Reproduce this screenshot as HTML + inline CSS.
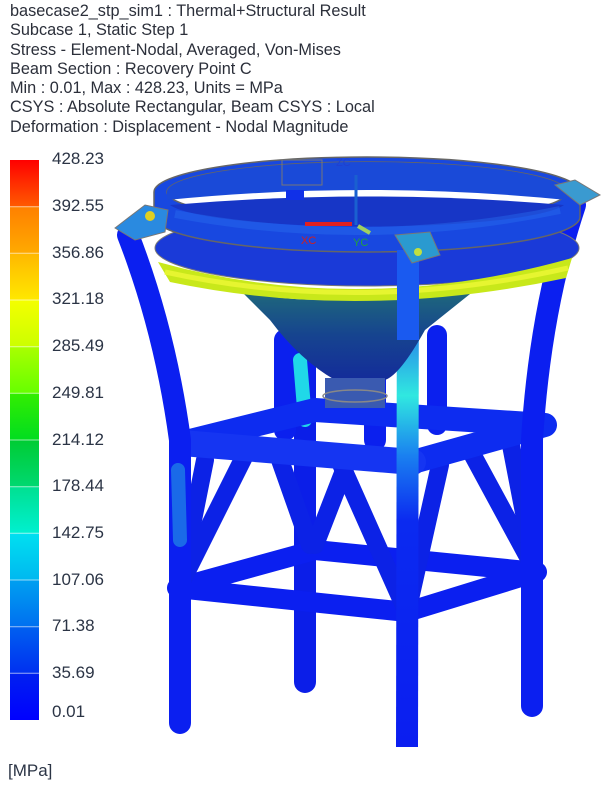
<!DOCTYPE html>
<html><head><meta charset="utf-8"><style>
html,body{margin:0;padding:0;background:#fff;width:607px;height:793px;overflow:hidden;position:relative}
.hd{position:absolute;left:10px;top:2px;font:16.3px/19.3px "Liberation Sans",sans-serif;color:#2b2f3a;white-space:nowrap}
.lb{position:absolute;left:52px;font:17px "Liberation Sans",sans-serif;color:#2b3445}
svg{position:absolute;left:0;top:0}
</style></head><body>
<div class="hd">basecase2_stp_sim1 : Thermal+Structural Result<br>Subcase 1, Static Step 1<br>Stress - Element-Nodal, Averaged, Von-Mises<br>Beam Section : Recovery Point C<br>Min : 0.01, Max : 428.23, Units = MPa<br>CSYS : Absolute Rectangular, Beam CSYS : Local<br>Deformation : Displacement - Nodal Magnitude</div>
<svg width="607" height="793" viewBox="0 0 607 793">
<defs>
<linearGradient id="leg" x1="0" y1="0" x2="0" y2="1">
<stop offset="0" stop-color="#ff0000"/><stop offset="0.083" stop-color="#ff5a00"/>
<stop offset="0.083" stop-color="#ff8000"/><stop offset="0.167" stop-color="#ffaa00"/>
<stop offset="0.167" stop-color="#ffb800"/><stop offset="0.25" stop-color="#ffe800"/>
<stop offset="0.25" stop-color="#f4ff00"/><stop offset="0.333" stop-color="#ccff00"/>
<stop offset="0.333" stop-color="#aaff00"/><stop offset="0.417" stop-color="#66ff00"/>
<stop offset="0.417" stop-color="#33ee00"/><stop offset="0.5" stop-color="#00dd20"/>
<stop offset="0.5" stop-color="#00cc33"/><stop offset="0.583" stop-color="#00d870"/>
<stop offset="0.583" stop-color="#00e090"/><stop offset="0.667" stop-color="#00f0d0"/>
<stop offset="0.667" stop-color="#00e0f0"/><stop offset="0.75" stop-color="#00b8f0"/>
<stop offset="0.75" stop-color="#00a0f0"/><stop offset="0.833" stop-color="#0070f0"/>
<stop offset="0.833" stop-color="#0060f0"/><stop offset="0.917" stop-color="#0030f0"/>
<stop offset="0.917" stop-color="#0020f0"/><stop offset="1" stop-color="#0000ff"/>
</linearGradient>
<linearGradient id="frontleg" x1="0" y1="0" x2="0" y2="1">
<stop offset="0" stop-color="#1a5af0"/><stop offset="0.2" stop-color="#2a9ae8"/><stop offset="0.3" stop-color="#30e8e0"/><stop offset="0.42" stop-color="#1a80f0"/><stop offset="0.55" stop-color="#0b2af0"/><stop offset="1" stop-color="#0b1ef0"/>
</linearGradient>
<linearGradient id="cone" x1="0" y1="0" x2="0" y2="1">
<stop offset="0" stop-color="#1f6a7a"/><stop offset="0.5" stop-color="#16448f"/><stop offset="1" stop-color="#142c9a"/>
</linearGradient>
</defs>
<rect x="10" y="160" width="29" height="560" fill="url(#leg)"/>
<g stroke="#fff" stroke-width="1" opacity="0.6">
<line x1="10" y1="206.7" x2="39" y2="206.7"/><line x1="10" y1="253.3" x2="39" y2="253.3"/><line x1="10" y1="300" x2="39" y2="300"/><line x1="10" y1="346.7" x2="39" y2="346.7"/><line x1="10" y1="393.3" x2="39" y2="393.3"/><line x1="10" y1="440" x2="39" y2="440"/><line x1="10" y1="486.7" x2="39" y2="486.7"/><line x1="10" y1="533.3" x2="39" y2="533.3"/><line x1="10" y1="580" x2="39" y2="580"/><line x1="10" y1="626.7" x2="39" y2="626.7"/><line x1="10" y1="673.3" x2="39" y2="673.3"/>
</g>
<g stroke-linecap="round" fill="none">
<line x1="305" y1="340" x2="305" y2="682" stroke="#0b1ee8" stroke-width="22"/>
<line x1="285" y1="340" x2="285" y2="430" stroke="#0b20ee" stroke-width="22"/>
<line x1="300" y1="360" x2="305" y2="420" stroke="#20d8e8" stroke-width="14"/>
<line x1="375" y1="345" x2="375" y2="440" stroke="#0b20ee" stroke-width="22"/>
<line x1="437" y1="335" x2="437" y2="425" stroke="#0b20ee" stroke-width="20"/>
<polyline points="177,588 407,612 537,572 315,550 177,588" stroke="#0b1ff0" stroke-width="20" stroke-linejoin="round"/>
<g stroke="#0c22e6" stroke-width="18">
<line x1="180" y1="585" x2="245" y2="455"/><line x1="180" y1="585" x2="205" y2="460"/>
<line x1="405" y1="608" x2="340" y2="462"/><line x1="408" y1="608" x2="440" y2="465"/>
<line x1="535" y1="570" x2="470" y2="450"/><line x1="535" y1="570" x2="510" y2="440"/>
<line x1="310" y1="545" x2="280" y2="460"/><line x1="315" y1="545" x2="350" y2="455"/>
</g>
<polyline points="315,410 545,425 413,462 182,443 315,410" stroke="#0d2cf0" stroke-width="24" stroke-linejoin="round"/>
<line x1="182" y1="443" x2="413" y2="462" stroke="#1535f2" stroke-width="26"/>
<path d="M128 235 Q165 330 180 440 L180 723" stroke="#0b1ff0" stroke-width="22"/>
<path d="M178 470 L180 540" stroke="#1a6ae8" stroke-width="14"/>
<path d="M575 205 Q540 310 532 440 L532 706" stroke="#0b1ff0" stroke-width="22"/>
<line x1="408" y1="245" x2="407" y2="747" stroke="url(#frontleg)" stroke-width="22" stroke-linecap="butt"/>
</g>
<path d="M240 290 Q300 310 475 290 L425 330 Q400 375 385 380 L335 380 Q300 360 270 320 Z" fill="url(#cone)"/>
<rect x="325" y="378" width="60" height="30" fill="#3a5ab0"/>
<ellipse cx="355" cy="396" rx="32" ry="6" fill="none" stroke="#888" stroke-width="1.5"/>
<ellipse cx="367" cy="248" rx="212" ry="38" fill="#1a3ad8" stroke="#777" stroke-width="1"/>
<path d="M158 262 Q360 318 572 258 L566 278 Q360 322 170 282 Z" fill="#c8e81a"/>
<path d="M165 272 Q360 315 568 268" stroke="#e6f530" stroke-width="5" fill="none"/>
<path d="M154 192 A213 35 0 0 1 580 192 L580 217 A213 35 0 0 1 154 217 Z" fill="#1848e0" stroke="#666" stroke-width="1.5"/>
<ellipse cx="367" cy="192" rx="200" ry="30" fill="#fff" stroke="#666" stroke-width="1.5"/>
<path d="M167 192 A200 30 0 0 1 567 192 L567 200 Q367 180 167 200 Z" fill="#1a4ad8"/>
<path d="M170 205 Q367 188 564 205 A200 26 0 0 1 170 205 Z" fill="#1736c6"/>
<path d="M175 214 Q365 250 560 210" stroke="#2a70f0" stroke-width="8" fill="none" opacity="0.4"/>
<line x1="408" y1="250" x2="408" y2="340" stroke="#1a5af0" stroke-width="22"/>
<rect x="282" y="160" width="40" height="25" fill="none" stroke="#777"/>
<line x1="295" y1="190" x2="295" y2="200" stroke="#1030e8" stroke-width="18"/>
<polygon points="115,228 145,205 168,210 165,232 135,240" fill="#2a8ae0" stroke="#777"/>
<circle cx="150" cy="216" r="5" fill="#e0d020"/>
<polygon points="395,235 430,232 440,255 412,263" fill="#2a9ad0" stroke="#777"/>
<circle cx="418" cy="252" r="4" fill="#c0e040"/>
<polygon points="555,185 575,180 600,195 580,205" fill="#3a9ad0" stroke="#777"/>
<line x1="356" y1="175" x2="356" y2="225" stroke="#1a60d0" stroke-width="3"/>
<line x1="305" y1="224" x2="352" y2="224" stroke="#e02020" stroke-width="4"/>
<line x1="358" y1="226" x2="370" y2="233" stroke="#a0d060" stroke-width="4"/>
<text x="301" y="244" font-family="Liberation Sans" font-size="11" fill="#d02020">XC</text>
<text x="353" y="246" font-family="Liberation Sans" font-size="11" fill="#20a040">YC</text>
<text x="336" y="166" font-family="Liberation Sans" font-size="11" fill="#2040d0">ZC</text>
</svg>
<div class="lb" style="top:149px">428.23</div>
<div class="lb" style="top:196px">392.55</div>
<div class="lb" style="top:243px">356.86</div>
<div class="lb" style="top:289px">321.18</div>
<div class="lb" style="top:336px">285.49</div>
<div class="lb" style="top:383px">249.81</div>
<div class="lb" style="top:430px">214.12</div>
<div class="lb" style="top:476px">178.44</div>
<div class="lb" style="top:523px">142.75</div>
<div class="lb" style="top:570px">107.06</div>
<div class="lb" style="top:616px">71.38</div>
<div class="lb" style="top:663px">35.69</div>
<div class="lb" style="top:702px">0.01</div>
<div class="lb" style="top:761px;left:8px">[MPa]</div>
</body></html>
